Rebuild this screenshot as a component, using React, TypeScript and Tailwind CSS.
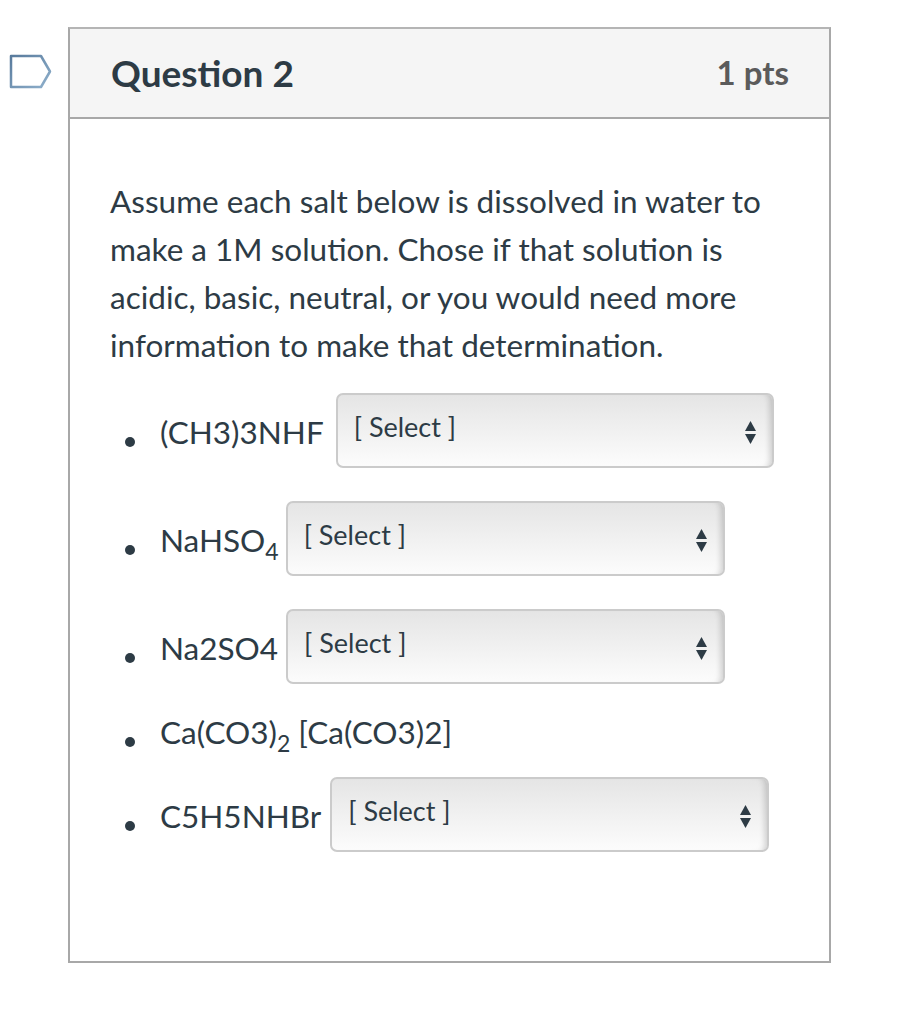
const SelectBox = ({ width = "w-[438px]" }: { width?: string }) => (
  <div
    className={`${width} relative flex h-[75px] shrink-0 items-center rounded-[7px] border-2 border-[#cbcbcb] bg-gradient-to-b from-[#e5e5e5] to-[#fcfcfc] pl-[16px] pb-[6px] shadow-[inset_-7px_0_6px_-5px_rgba(0,0,0,0.18)]`}
  >
    <span className="text-[27px] text-[#2d3b45]">[ Select ]</span>
    <svg
      className="absolute right-[16px] top-[26px]"
      width="11"
      height="23"
      viewBox="0 0 11 23"
    >
      <path d="M5.5 0 L11 10 L0 10 Z" fill="#2d3b45" />
      <path d="M0 13 L11 13 L5.5 23 Z" fill="#2d3b45" />
    </svg>
  </div>
);

const Bullet = () => (
  <span className="relative top-[11px] mr-[25px] inline-block h-[10px] w-[10px] shrink-0 rounded-full bg-[#2d3b45]" />
);

export default function App() {
  return (
    <div
      className="relative min-h-[1010px] w-[902px] bg-white pt-[27px] text-[#2d3b45]"
      style={{ fontFamily: "Lato, 'Open Sans', sans-serif" }}
    >
      <svg
        className="absolute left-[9px] top-[54px]"
        width="44"
        height="36"
        viewBox="0 0 44 36"
      >
        <defs>
          <linearGradient id="tg" x1="0" y1="0" x2="1" y2="1">
            <stop offset="0" stopColor="#587a9c" />
            <stop offset="1" stopColor="#8fb0cc" />
          </linearGradient>
        </defs>
        <path
          d="M2 2 H32 L41 17.5 L32 33 H2 Z"
          fill="none"
          stroke="url(#tg)"
          strokeWidth="2.5"
          strokeLinejoin="round"
        />
      </svg>

      <div className="ml-[68px] w-[763px] border-2 border-[#a8a8a8] border-t-[#b5b5b5]">
        <div className="flex h-[90px] items-center justify-between border-b-2 border-[#a8a8a8] bg-[#f5f5f5] pl-[41px] pr-[40px]">
          <h2 className="text-[37px] font-bold text-[#2d3b45]">Question 2</h2>
          <span className="text-[33px] font-bold text-[#5b5b5b]">1 pts</span>
        </div>

        <div className="pl-[40px] pr-[40px] pt-[58px] pb-[109px]">
          <p className="text-[31.5px] leading-[48px]">
            Assume each salt below is dissolved in water to make a 1M solution. Chose if that
            solution is acidic, basic, neutral, or you would need more information to make that
            determination.
          </p>

          <ul className="mt-[24px] flex flex-col gap-[33px] pl-[15px] text-[31.5px]">
            <li className="flex items-center">
              <Bullet />
              <span className="mt-[5px]">(CH3)3NHF</span>
              <span className="ml-[12px]">
                <SelectBox />
              </span>
            </li>
            <li className="flex items-center">
              <Bullet />
              <span className="mt-[5px]">
                NaHSO<sub className="relative top-[8px] text-[23px]">4</sub>
              </span>
              <span className="ml-[7px]">
                <SelectBox width="w-[439px]" />
              </span>
            </li>
            <li className="flex items-center">
              <Bullet />
              <span className="mt-[5px]">Na2SO4</span>
              <span className="ml-[8px]">
                <SelectBox width="w-[439px]" />
              </span>
            </li>
            <li className="flex h-[27px] items-center">
              <Bullet />
              <span className="mt-[5px]">
                Ca(CO3)<sub className="relative top-[8px] text-[23px]">2</sub> [Ca(CO3)2]
              </span>
            </li>
            <li className="flex items-center">
              <Bullet />
              <span className="mt-[5px]">C5H5NHBr</span>
              <span className="ml-[9px]">
                <SelectBox width="w-[439px]" />
              </span>
            </li>
          </ul>
        </div>
      </div>
    </div>
  );
}
